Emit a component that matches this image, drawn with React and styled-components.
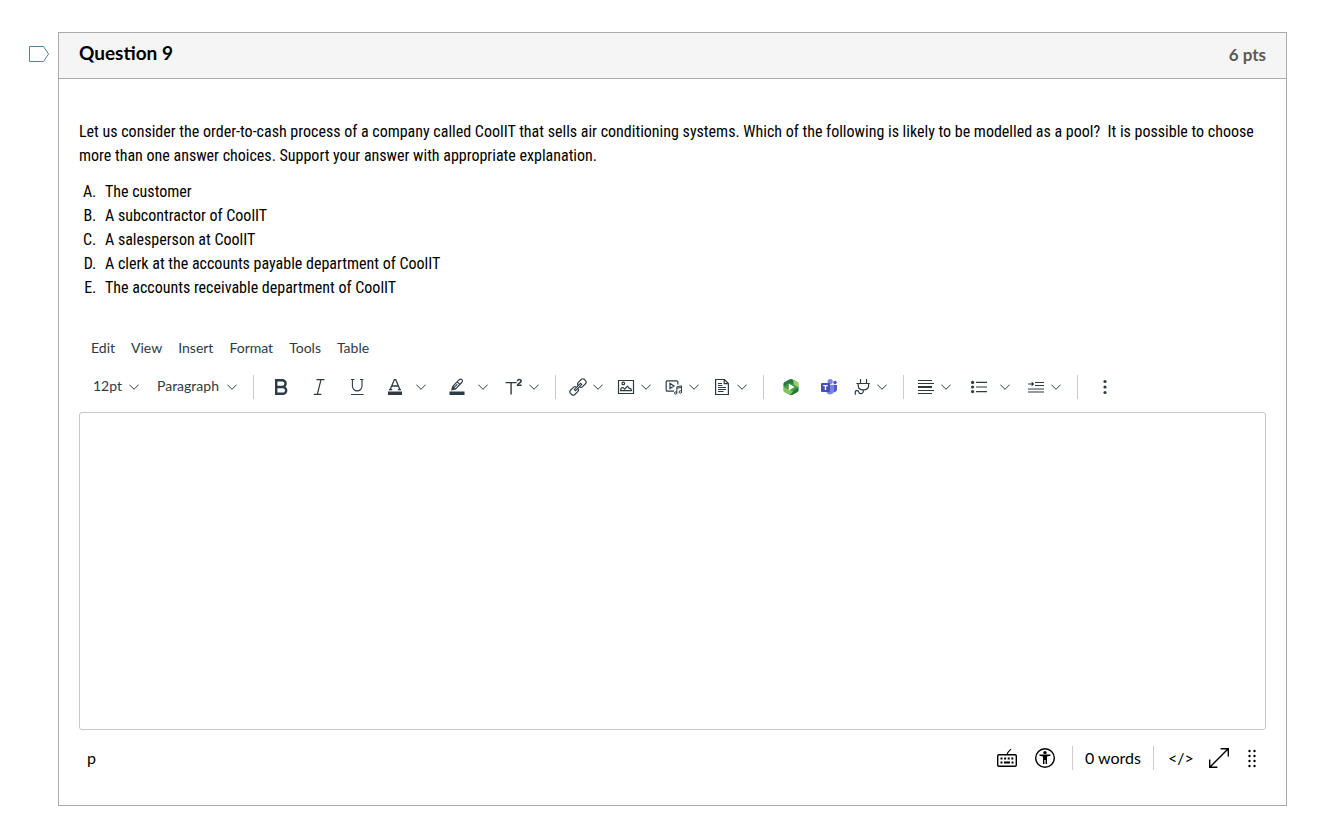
import React from "react";
import styled, { createGlobalStyle } from "styled-components";

const ink = "#2d3b45";

const GlobalStyle = createGlobalStyle`
  *, *::before, *::after { box-sizing: border-box; }
  body {
    margin: 0;
    background: #fff;
    color: #000;
    font-family: Lato, "Liberation Sans", sans-serif;
    font-size: 16px;
    line-height: 24px;
  }
  button, select, textarea { font: inherit; color: inherit; }
`;

const Page = styled.main`
  display: flex;
  align-items: flex-start;
  gap: 9px;
  padding: 32px 45px 12px 29px;
`;

const FlagButton = styled.button`
  display: flex;
  flex: none;
  margin: 13px 0 0;
  padding: 0;
  border: 0;
  background: none;
`;

const Card = styled.section`
  flex: 1;
  min-width: 0;
  border: 1px solid #aaa;
`;

const CardHeader = styled.header`
  display: flex;
  align-items: center;
  justify-content: space-between;
  padding: 8px 20px 13px;
  background: #f5f5f5;
  border-bottom: 1px solid #aaa;
`;

const Title = styled.h2`
  margin: 0;
  font-size: 19px;
  line-height: 24px;
  font-weight: 700;
`;

const Points = styled.span`
  padding-top: 3px;
  color: #595959;
  font-size: 17px;
  line-height: 21px;
  font-weight: 700;
`;

const CardBody = styled.div`
  padding: 41px 20px 31px;
`;

const Prompt = styled.div`
  font-family: "Roboto Condensed", Lato, sans-serif;
  font-size: 16px;
`;

const Paragraph = styled.p`
  margin: 0 0 12px;
`;

const Choices = styled.ol`
  margin: 0 0 36px;
  padding-left: 21px;
  list-style: upper-alpha;
`;

const Choice = styled.li`
  padding-left: 5px;
`;

const MenuBar = styled.div`
  display: flex;
  gap: 16px;
  padding: 0 12px;
`;

const MenuButton = styled.button`
  padding: 0;
  border: 0;
  background: none;
  color: ${ink};
  font-size: 14px;
  line-height: 24px;
`;

const Toolbar = styled.div`
  display: flex;
  align-items: center;
  gap: 4px;
  height: 40px;
  margin: 7px 0 5px;
  padding: 0 7px;
  color: ${ink};
`;

const Separator = styled.span`
  flex: none;
  width: 1px;
  height: 24px;
  margin: 0 ${(p) => p.$after || 6}px 0 ${(p) => p.$before || 5}px;
  background: #c7cdd1;
`;

const Picker = styled.label`
  display: grid;
  align-items: center;
  width: ${(p) => p.$width}px;
  font-size: 14px;
  line-height: 24px;
  > * { grid-area: 1 / 1; }
  > svg { justify-self: end; margin-right: 7px; pointer-events: none; }
`;

const Select = styled.select`
  width: 100%;
  padding: 0 20px 2px 7px;
  border: 0;
  appearance: none;
  background: none;
`;

const ToolButton = styled.button`
  display: flex;
  flex: none;
  align-items: center;
  justify-content: ${(p) => (p.$menu ? "space-between" : "center")};
  width: ${(p) => (p.$menu ? 44 : 34)}px;
  height: 34px;
  padding: ${(p) => (p.$menu ? "0 7px 0 0" : "0")};
  border: 0;
  background: none;
`;

const SplitButton = styled.div`
  display: flex;
`;

const MenuToggle = styled.button`
  display: flex;
  align-items: center;
  width: 24px;
  padding: 0 4px;
  border: 0;
  background: none;
`;

const Editor = styled.textarea`
  display: block;
  width: 100%;
  height: 318px;
  padding: 12px;
  border: 1px solid #c7c7c7;
  border-radius: 3px;
  resize: none;
`;

const StatusBar = styled.div`
  display: flex;
  align-items: center;
  height: 32px;
  margin-top: 12px;
  padding: 0 2px 0 8px;
`;

const StatusGroup = styled.div`
  display: flex;
  align-items: center;
  gap: 4px;
  margin-left: auto;
`;

const StatusText = styled.span`
  font-size: 16px;
`;

const StatusCode = styled.button`
  width: 34px;
  padding: 0;
  border: 0;
  background: none;
  font-size: 16px;
`;

const GripButton = styled.button`
  display: flex;
  padding: 0;
  border: 0;
  background: none;
`;

const Icon = ({ size = 24, children, ...rest }) => (
  <svg
    width={size}
    height={size}
    viewBox={`0 0 ${size} ${size}`}
    fill="none"
    stroke="currentColor"
    strokeWidth="1"
    aria-hidden="true"
    {...rest}
  >
    {children}
  </svg>
);

const Chevron = () => (
  <svg width="10" height="10" viewBox="0 0 10 10" fill="none" stroke={ink} strokeWidth="1" aria-hidden="true">
    <path d="M0.3 2.6 5 7.3 9.7 2.6" />
  </svg>
);

const BoldIcon = () => (
  <Icon strokeWidth="2.4">
    <path d="M7.2 5.2h6a3.3 3.3 0 0 1 0 6.8h-6zM7.2 12h6.6a3.4 3.4 0 0 1 0 6.8H7.2z" />
  </Icon>
);
const ItalicIcon = () => (
  <Icon strokeWidth="1.2"><path d="M9.5 4.6h8M6.8 19.4h7.6M14 4.6 10.3 19.4" /></Icon>
);
const UnderlineIcon = () => (
  <Icon strokeWidth="1.1">
    <path d="M6 19.5h12.5M6 4.5h3.4M15 4.5h3.4M7.4 4.5v6.6a4.8 4.8 0 0 0 9.6 0V4.5" />
  </Icon>
);
const ColorIcon = () => (
  <Icon strokeWidth="1.3">
    <path d="M7.2 14.4 11.4 4.6h1.3l4.2 9.8M8.8 11h6.5M6 14.6h3.2M14.8 14.6H18" />
    <path d="M5 16.5h14V20H5z" fill={ink} stroke="none" />
  </Icon>
);
const HighlightIcon = () => (
  <Icon strokeWidth="1.1">
    <path d="M6.8 14.8 7.8 11.4 14 4.9c1-1 2.2-1 3-.2.8.8.6 1.9-.3 2.8L10.6 14zM7.8 11.4l2.8 2.6M12.2 6.8l2.8 2.6M6.8 14.8l5.6-5.6" />
    <path d="M4.5 16.5h15V20h-15z" fill={ink} stroke="none" />
  </Icon>
);
const SuperscriptIcon = () => (
  <Icon strokeWidth="1.4">
    <path d="M3.6 7.6h11M9.1 7.6v11.8" />
    <path d="M15.4 6.3c.1-2.3 3.7-2.3 3.7-.1 0 1.5-3.6 2.4-3.6 4h4.1" strokeWidth="1.6" />
  </Icon>
);
const LinkIcon = () => (
  <Icon strokeWidth="1.1">
    <g transform="rotate(-45 12 12)">
      <rect x="2.2" y="9" width="8.6" height="6" rx="2.2" />
      <rect x="13.2" y="9" width="8.6" height="6" rx="2.2" />
      <path d="M7.6 11.2h8.8v1.6H7.6z" fill="#fff" />
    </g>
  </Icon>
);
const ImageIcon = () => (
  <Icon strokeWidth="1.2">
    <path d="M4.5 5.5h15v13h-15zM6.6 15.6c0-2.8 1.6-4 3.4-2.2l.8.8 2.7-3 1.7 2.2c1.4-.4 2 .6 2.2 2.2zM8 8.4a1.3 1.3 0 1 1 2.6 0 1.3 1.3 0 1 1-2.6 0" />
  </Icon>
);
const MediaIcon = () => (
  <Icon>
    <path d="M12 16.2H5.2a1 1 0 0 1-1-1V6.8a1 1 0 0 1 1-1h9.6a1 1 0 0 1 1 1v2.6M8 8.4v5l4-2.5z" strokeWidth="1.2" />
    <path d="M14.8 18V11.8l4.7-1v6.2M14.8 13.3l4.7-1" />
    <circle cx="13.7" cy="18" r="1.2" />
    <circle cx="18.4" cy="17" r="1.2" />
  </Icon>
);
const DocumentIcon = () => (
  <Icon strokeWidth="1.2">
    <path d="M5.6 4.5h8.8l4 4v11H5.6zM14.2 4.5v4.2h4.2M8 8.5h4M8 10.5h4.4M8 12.5h8M8 14.5h8M8 16.5h5.6" />
  </Icon>
);
const StudioIcon = () => (
  <Icon stroke="none">
    <path d="M10.6 4.4a3 3 0 0 1 2.8 0l5 2.6a1.8 1.8 0 0 1 1 1.6v6.6a2 2 0 0 1-1 1.8l-5 2.8a3 3 0 0 1-2.8 0l-5-2.8a2 2 0 0 1-1-1.8V8.8a1.8 1.8 0 0 1 1-1.6z" fill="#3f9b46" />
    <path d="M10.6 4.4a3 3 0 0 1 2.8 0l3.2 1.7-3.6 2.9-3-1-5.4 3.6V8.8a1.8 1.8 0 0 1 1-1.6z" fill="#2c7a3e" />
    <path d="M14 5l4.4 2a1.8 1.8 0 0 1 1 1.6v3.8L15 9.8z" fill="#a0cc6c" />
    <path d="M4.6 12v3.2a2 2 0 0 0 1 1.8l5 2.8 3.6-3.2z" fill="#86c257" />
    <path d="M12 20.1a3 3 0 0 0 1.4-.3l5-2.8a2 2 0 0 0 1-1.8v-3L14.6 16z" fill="#1f7438" />
    <path d="M9.8 8.8v6.6l5.8-3.3z" fill="#fff" />
  </Icon>
);
const TeamsIcon = () => (
  <Icon stroke="none">
    <circle cx="18" cy="7.6" r="1.8" fill="#5059c9" />
    <path d="M15.5 10H20v4.8a2.7 2.7 0 0 1-4.5 1.6z" fill="#5059c9" />
    <circle cx="13.2" cy="6.6" r="2.6" fill="#7b83eb" />
    <path d="M9.2 9.8H17v5.6a4 4 0 0 1-7.8 1.2z" fill="#7b83eb" />
    <rect x="4" y="8" width="9" height="9" rx="1" fill="#464eb8" />
    <path d="M6.3 10h4.4v1.2H9.2V15H7.8v-3.8H6.3z" fill="#fff" />
  </Icon>
);
const PlugIcon = () => (
  <Icon strokeWidth="1.2">
    <path d="M10.5 4v4M16.5 4v4M6.4 8.5h13.4M8.2 8.6v1.8c0 3 2.4 4.4 5.2 4.4s5.2-1.4 5.2-4.4V8.6M13.3 14.8v1.4c0 2.8-3.6 3.4-4.4 1-.7-2.6-4.2-2-3.6.8v1.8" />
  </Icon>
);
const AlignIcon = () => (
  <Icon><path d="M4 5.5h14M4 8.5h16M4 11.5h14M4 12.5h14M4 15.5h16M4 18.5h14" strokeWidth="1" /></Icon>
);
const ListIcon = () => (
  <Icon strokeWidth="1.2">
    <path d="M9 7.4h11M9 12h11M9 16.6h11" />
    <g fill={ink} stroke="none">
      <circle cx="5.6" cy="7.4" r="1.6" /><circle cx="5.6" cy="12" r="1.6" /><circle cx="5.6" cy="16.6" r="1.6" />
    </g>
  </Icon>
);
const IndentIcon = () => (
  <Icon strokeWidth="1.2">
    <path d="M11 7.5h9M11 10.5h9M4 14h16M4 17h16M4 9h5" />
    <path d="M7.6 6.4 10.4 9 7.6 11.6z" fill={ink} stroke="none" />
  </Icon>
);
const MoreIcon = () => (
  <Icon stroke="none" fill={ink}>
    <circle cx="12" cy="6.5" r="1.6" /><circle cx="12" cy="12" r="1.6" /><circle cx="12" cy="17.5" r="1.6" />
  </Icon>
);
const KeyboardIcon = () => (
  <Icon strokeWidth="1.4">
    <rect x="2.7" y="8.7" width="18.6" height="11.6" rx="1.2" />
    <path d="M12 8.5 12.8 6.6 16 3" strokeWidth="1.1" />
    <path d="M5.5 12.5h13" strokeWidth="2" strokeDasharray="2 1.6" />
    <path d="M5.5 16.5h2M9 16.5h6M16.5 16.5h2" strokeWidth="2" />
  </Icon>
);
const AccessibilityIcon = () => (
  <Icon strokeWidth="1.4">
    <circle cx="12" cy="12" r="9.3" />
    <circle cx="12" cy="6.6" r="1.7" fill="currentColor" stroke="none" />
    <path d="M6.5 8.6h11v1.2L14 10.6V18h-1.4v-4h-1.2v4H10v-7.4L6.5 9.8z" fill="currentColor" stroke="none" />
  </Icon>
);
const ExpandIcon = () => (
  <Icon strokeWidth="1.4"><path d="M2.8 21.2 21.2 2.8M13.6 2.7h7.7v7.7M2.7 13.6v7.7h7.7" /></Icon>
);
const GripIcon = () => (
  <Icon stroke="none" fill="currentColor">
    {[5, 10, 15, 20].map((y) => (
      <React.Fragment key={y}>
        <circle cx="9.5" cy={y} r="1.2" /><circle cx="14.5" cy={y} r="1.2" />
      </React.Fragment>
    ))}
  </Icon>
);

const Tool = ({ label, icon: Glyph, menu }) => (
  <ToolButton type="button" aria-label={label} $menu={menu}>
    <Glyph />
    {menu && <Chevron />}
  </ToolButton>
);

const Split = ({ label, icon: Glyph }) => (
  <SplitButton>
    <ToolButton type="button" aria-label={label}><Glyph /></ToolButton>
    <MenuToggle type="button" aria-label={`${label} options`}><Chevron /></MenuToggle>
  </SplitButton>
);

const menus = ["Edit", "View", "Insert", "Format", "Tools", "Table"];
const choices = [
  "The customer",
  "A subcontractor of CoolIT",
  "A salesperson at CoolIT",
  "A clerk at the accounts payable department of CoolIT",
  "The accounts receivable department of CoolIT",
];

export default function App() {
  return (
    <>
      <GlobalStyle />
      <Page>
        <FlagButton type="button" aria-label="Flag question">
          <svg width="20" height="18" viewBox="0 0 20 18" fill="#fff" stroke="#5a8199" aria-hidden="true">
            <path d="M0.5 1.5h14l5 7.5-5 7.5h-14z" />
          </svg>
        </FlagButton>
        <Card>
          <CardHeader>
            <Title>Question 9</Title>
            <Points>6 pts</Points>
          </CardHeader>
          <CardBody>
            <Prompt>
              <Paragraph>
                Let us consider the order-to-cash process of a company called CoolIT that sells air conditioning
                systems. Which of the following is likely to be modelled as a pool?&nbsp; It is possible to choose
                more than one answer choices. Support your answer with appropriate explanation.
              </Paragraph>
              <Choices>
                {choices.map((c) => <Choice key={c}>{c}</Choice>)}
              </Choices>
            </Prompt>
            <MenuBar>
              {menus.map((m) => <MenuButton type="button" key={m}>{m}</MenuButton>)}
            </MenuBar>
            <Toolbar>
              <Picker $width={60}>
                <Select aria-label="Font size"><option>12pt</option></Select>
                <Chevron />
              </Picker>
              <Picker $width={94}>
                <Select aria-label="Block style"><option>Paragraph</option></Select>
                <Chevron />
              </Picker>
              <Separator />
              <Tool label="Bold" icon={BoldIcon} />
              <Tool label="Italic" icon={ItalicIcon} />
              <Tool label="Underline" icon={UnderlineIcon} />
              <Split label="Text color" icon={ColorIcon} />
              <Split label="Highlight color" icon={HighlightIcon} />
              <Tool label="Superscript" icon={SuperscriptIcon} menu />
              <Separator />
              <Tool label="Links" icon={LinkIcon} menu />
              <Tool label="Images" icon={ImageIcon} menu />
              <Tool label="Media" icon={MediaIcon} menu />
              <Tool label="Documents" icon={DocumentIcon} menu />
              <Separator />
              <Tool label="Video" icon={StudioIcon} />
              <Tool label="Teams meeting" icon={TeamsIcon} />
              <Tool label="Apps" icon={PlugIcon} menu />
              <Separator />
              <Tool label="Align" icon={AlignIcon} menu />
              <Split label="List" icon={ListIcon} />
              <Tool label="Indent" icon={IndentIcon} menu />
              <Separator />
              <Tool label="More" icon={MoreIcon} />
            </Toolbar>
            <Editor aria-label="Answer" />
            <StatusBar>
              <StatusText>p</StatusText>
              <StatusGroup>
                <Tool label="Keyboard shortcuts" icon={KeyboardIcon} />
                <Tool label="Accessibility checker" icon={AccessibilityIcon} />
                <Separator $before={6} $after={8} />
                <StatusText>0 words</StatusText>
                <Separator $before={8} $after={6} />
                <StatusCode type="button" aria-label="Show HTML">&lt;/&gt;</StatusCode>
                <Tool label="Fullscreen" icon={ExpandIcon} />
                <GripButton type="button" aria-label="Resize"><GripIcon /></GripButton>
              </StatusGroup>
            </StatusBar>
          </CardBody>
        </Card>
      </Page>
    </>
  );
}
